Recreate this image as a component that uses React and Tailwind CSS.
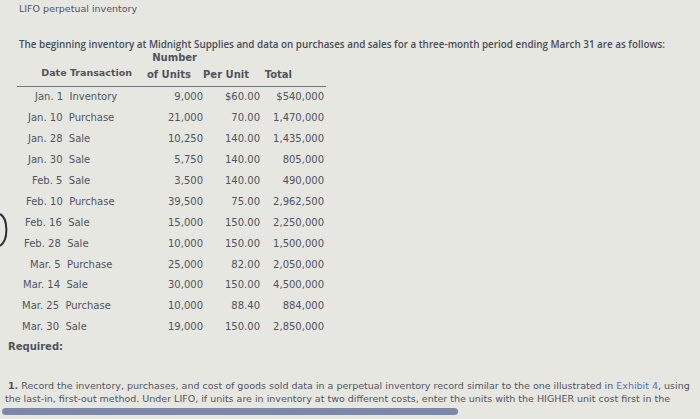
import React from "react";

const rows = [
  { label: "Jan. 1  Inventory", pl: "pl-[18px]", units: "9,000", per: "$60.00", total: "$540,000" },
  { label: "Jan. 10  Purchase", pl: "pl-[11px]", units: "21,000", per: "70.00", total: "1,470,000" },
  { label: "Jan. 28  Sale", pl: "pl-[11px]", units: "10,250", per: "140.00", total: "1,435,000" },
  { label: "Jan. 30  Sale", pl: "pl-[11px]", units: "5,750", per: "140.00", total: "805,000" },
  { label: "Feb. 5  Sale", pl: "pl-[15px]", units: "3,500", per: "140.00", total: "490,000" },
  { label: "Feb. 10  Purchase", pl: "pl-[9px]", units: "39,500", per: "75.00", total: "2,962,500" },
  { label: "Feb. 16  Sale", pl: "pl-[8px]", units: "15,000", per: "150.00", total: "2,250,000" },
  { label: "Feb. 28  Sale", pl: "pl-[7px]", units: "10,000", per: "150.00", total: "1,500,000" },
  { label: "Mar. 5  Purchase", pl: "pl-[13px]", units: "25,000", per: "82.00", total: "2,050,000" },
  { label: "Mar. 14  Sale", pl: "pl-[6px]", units: "30,000", per: "150.00", total: "4,500,000" },
  { label: "Mar. 25  Purchase", pl: "pl-[5px]", units: "10,000", per: "88.40", total: "884,000" },
  { label: "Mar. 30  Sale", pl: "pl-[5px]", units: "19,000", per: "150.00", total: "2,850,000" },
];

export default function App() {
  return (
    <div className="relative w-[700px] h-[419px] overflow-hidden bg-[#e7e7e1] text-[#4f545e] font-['DejaVu_Sans',sans-serif]">
      {/* dark arc at the left edge */}
      <svg className="absolute left-0 top-[212px]" width="10" height="36" viewBox="0 0 10 36">
        <path d="M0 2 C8 6 9 28 0 34" fill="none" stroke="#2c2f36" strokeWidth="2" />
      </svg>

      <div className="flex flex-col pt-[3px]">
        <p className="pl-[19px] text-[9.5px] leading-[12px]">LIFO perpetual inventory</p>
        <p className="pl-[19px] mt-[22px] text-[9.85px] leading-[14px] font-semibold whitespace-nowrap font-['Open_Sans',sans-serif] text-[#474c56]">
          The beginning inventory at Midnight Supplies and data on purchases and sales for a three-month period ending March 31 are as follows:
        </p>

        {/* table */}
        <div className="ml-[17px] mt-[-2px] w-[309px] text-[10px]">
          <div className="grid grid-cols-[128px_58px_57px_66px] font-bold border-b border-[#70747c] pb-[3px]">
            <div className="flex items-end justify-end pr-[13px] leading-[14px] pb-[3px] text-[9.5px]">Date Transaction</div>
            <div className="flex flex-col items-end leading-[17px]">
              <span className="pr-[6px]">Number</span>
              <span className="pr-[12px]">of Units</span>
            </div>
            <div className="flex items-end justify-end pr-[11px] leading-[17px]">Per Unit</div>
            <div className="flex items-end justify-end pr-[34px] leading-[17px]">Total</div>
          </div>
          <div className="flex flex-col">
            {rows.map((r) => (
              <div key={r.label} className="grid grid-cols-[128px_58px_57px_66px] h-[20.9px] items-center leading-[14px]">
                <span className={`whitespace-pre ${r.pl}`}>{r.label}</span>
                <span className="text-right">{r.units}</span>
                <span className="text-right">{r.per}</span>
                <span className="text-right pr-[2px]">{r.total}</span>
              </div>
            ))}
          </div>
        </div>

        <p className="pl-[8px] mt-[2px] text-[10px] leading-[14px] font-bold">Required:</p>
        <p className="pl-[8px] mt-[25px] text-[9.5px] leading-[13px] whitespace-nowrap">
          <span className="font-bold">1.</span> Record the inventory, purchases, and cost of goods sold data in a perpetual inventory record similar to the one illustrated in{" "}
          <span className="text-[#5a72b8]">Exhibit 4</span>, using
        </p>
        <p className="pl-[5px] text-[9.5px] leading-[13px] whitespace-nowrap">
          the last-in, first-out method. Under LIFO, if units are in inventory at two different costs, enter the units with the HIGHER unit cost first in the
        </p>
        <div className="ml-[2px] mt-[3px] w-[456px] h-[7px] rounded-full bg-[#7d87a8]" />
      </div>
    </div>
  );
}
